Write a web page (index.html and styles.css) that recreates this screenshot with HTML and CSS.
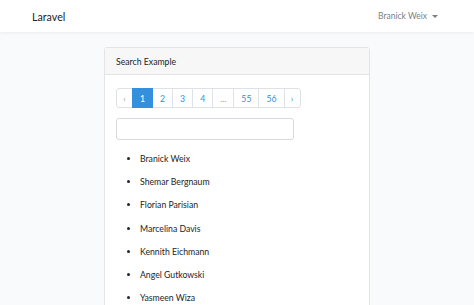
FILE: index.html
```html
<!DOCTYPE html>
<html>

<head>
    <title>Laravel</title>
    <link rel="stylesheet" href="styles.css">
</head>

<body>
    <nav class="navbar">
        <a class="brand" href="#">Laravel</a>
        <a class="user" href="#">Branick Weix <span class="caret"></span></a>
    </nav>

    <main class="content">
        <div class="card">
            <div class="card-header">Search Example</div>
            <div class="card-body">
                <ul class="pagination">
                    <li class="page disabled narrow">&lsaquo;</li>
                    <li class="page active">1</li>
                    <li class="page"><a href="#">2</a></li>
                    <li class="page"><a href="#">3</a></li>
                    <li class="page"><a href="#">4</a></li>
                    <li class="page disabled">...</li>
                    <li class="page"><a href="#">55</a></li>
                    <li class="page"><a href="#">56</a></li>
                    <li class="page narrow"><a href="#">&rsaquo;</a></li>
                </ul>

                <input class="search" type="text">

                <ul class="names">
                    <li>Branick Weix</li>
                    <li>Shemar Bergnaum</li>
                    <li>Florian Parisian</li>
                    <li>Marcelina Davis</li>
                    <li>Kennith Eichmann</li>
                    <li>Angel Gutkowski</li>
                    <li>Yasmeen Wiza</li>
                </ul>
            </div>
        </div>
    </main>
</body>

</html>
```

FILE: styles.css
```css
body {
    margin: 0;
    height: 100vh;
    overflow: hidden;
    background: #f8fafc;
    color: #212529;
    font-family: Lato, "Noto Sans", sans-serif;
    font-size: 8.7px;
}

a {
    color: inherit;
    text-decoration: none;
}

.navbar {
    height: 32px;
    display: flex;
    align-items: center;
    justify-content: space-between;
    padding: 0 36px 0 32px;
    background: white;
    box-shadow: 0 1px 3px rgba(0, 0, 0, 0.06);
}

.brand {
    font-size: 10.7px;
    color: #212529;
}

.user {
    color: #7b7f83;
    font-size: 8.5px;
    display: flex;
    align-items: center;
    gap: 5px;
}

.caret {
    width: 0;
    height: 0;
    border-left: 3px solid transparent;
    border-right: 3px solid transparent;
    border-top: 3px solid #7b7f83;
}

.content {
    display: flex;
    justify-content: center;
    padding-top: 15px;
}

.card {
    width: 266px;
    background: white;
    border: 1px solid #e3e4e6;
    border-radius: 3px;
    box-sizing: border-box;
}

.card-header {
    height: 27px;
    display: flex;
    align-items: center;
    padding: 0 11px;
    background: #f7f7f7;
    border-bottom: 1px solid #e3e4e6;
    box-sizing: border-box;
}

.card-body {
    padding: 13px 11px;
}

.pagination {
    display: flex;
    list-style: none;
    margin: 0;
    padding: 0;
}

.page {
    height: 20px;
    min-width: 20px;
    padding: 0 7px;
    box-sizing: border-box;
    display: flex;
    align-items: center;
    justify-content: center;
    border: 1px solid #dee2e6;
    margin-left: -1px;
    color: #3490dc;
}

.page:first-child {
    margin-left: 0;
    border-radius: 3px 0 0 3px;
}

.page:last-child {
    border-radius: 0 3px 3px 0;
}

.page.narrow {
    min-width: 17px;
    padding: 0 6px;
}

.page.disabled {
    color: #9ea3a8;
}

.page.active {
    background: #3490dc;
    border-color: #3490dc;
    color: white;
    position: relative;
}

.search {
    display: block;
    margin-top: 10px;
    width: 178px;
    height: 22px;
    box-sizing: border-box;
    border: 1px solid #d6dade;
    border-radius: 3px;
    background: white;
}

.names {
    margin: 7px 0 0;
    padding-left: 24px;
}

.names li {
    line-height: 23.2px;
}
```
